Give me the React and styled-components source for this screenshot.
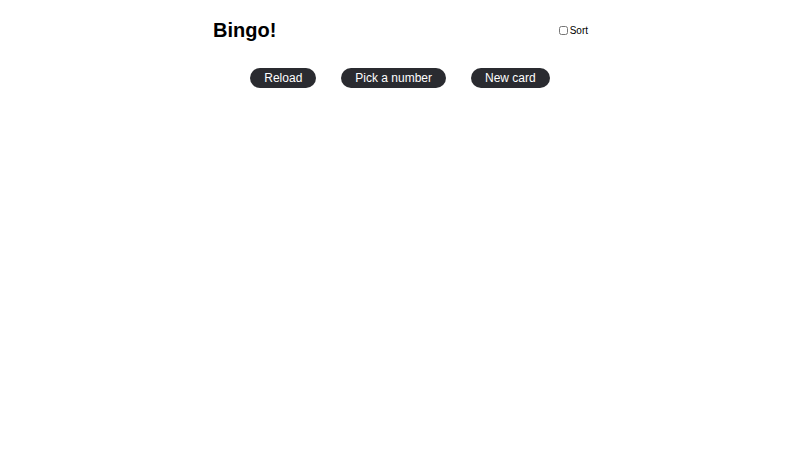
import React, { useState } from "react";
import styled, { createGlobalStyle } from "styled-components";

const GlobalStyle = createGlobalStyle`
  body {
    margin: 0;
    background: #ffffff;
    font-family: "Liberation Sans", Arial, sans-serif;
    color: #000000;
  }
`;

const Page = styled.div`
  width: 376px;
  margin: 0 auto;
  padding-top: 17px;
`;

const Header = styled.header`
  display: flex;
  align-items: center;
  justify-content: space-between;
  height: 26px;
`;

const Title = styled.h1`
  margin: 0 0 0 1px;
  font-size: 20px;
  font-weight: bold;
  line-height: 26px;
`;

const SortLabel = styled.label`
  display: flex;
  align-items: center;
  font-size: 10px;
  gap: 1px;
  cursor: pointer;
`;

const SortBox = styled.input`
  width: 9px;
  height: 9px;
  margin: 0 1px 0 0;
`;

const Actions = styled.div`
  display: flex;
  justify-content: center;
  gap: 25px;
  margin-top: 25px;
`;

const Pill = styled.button`
  height: 20px;
  padding: 0 14px;
  border: none;
  border-radius: 10px;
  background: #2a2b30;
  color: #ffffff;
  font-family: "Liberation Sans", Arial, sans-serif;
  font-size: 12px;
  line-height: 20px;
  cursor: pointer;
`;

export default function App() {
  const [sorted, setSorted] = useState(false);

  return (
    <>
      <GlobalStyle />
      <Page>
        <Header>
          <Title>Bingo!</Title>
          <SortLabel>
            <SortBox
              type="checkbox"
              checked={sorted}
              onChange={(e) => setSorted(e.target.checked)}
            />
            Sort
          </SortLabel>
        </Header>
        <Actions>
          <Pill>Reload</Pill>
          <Pill>Pick a number</Pill>
          <Pill>New card</Pill>
        </Actions>
      </Page>
    </>
  );
}
